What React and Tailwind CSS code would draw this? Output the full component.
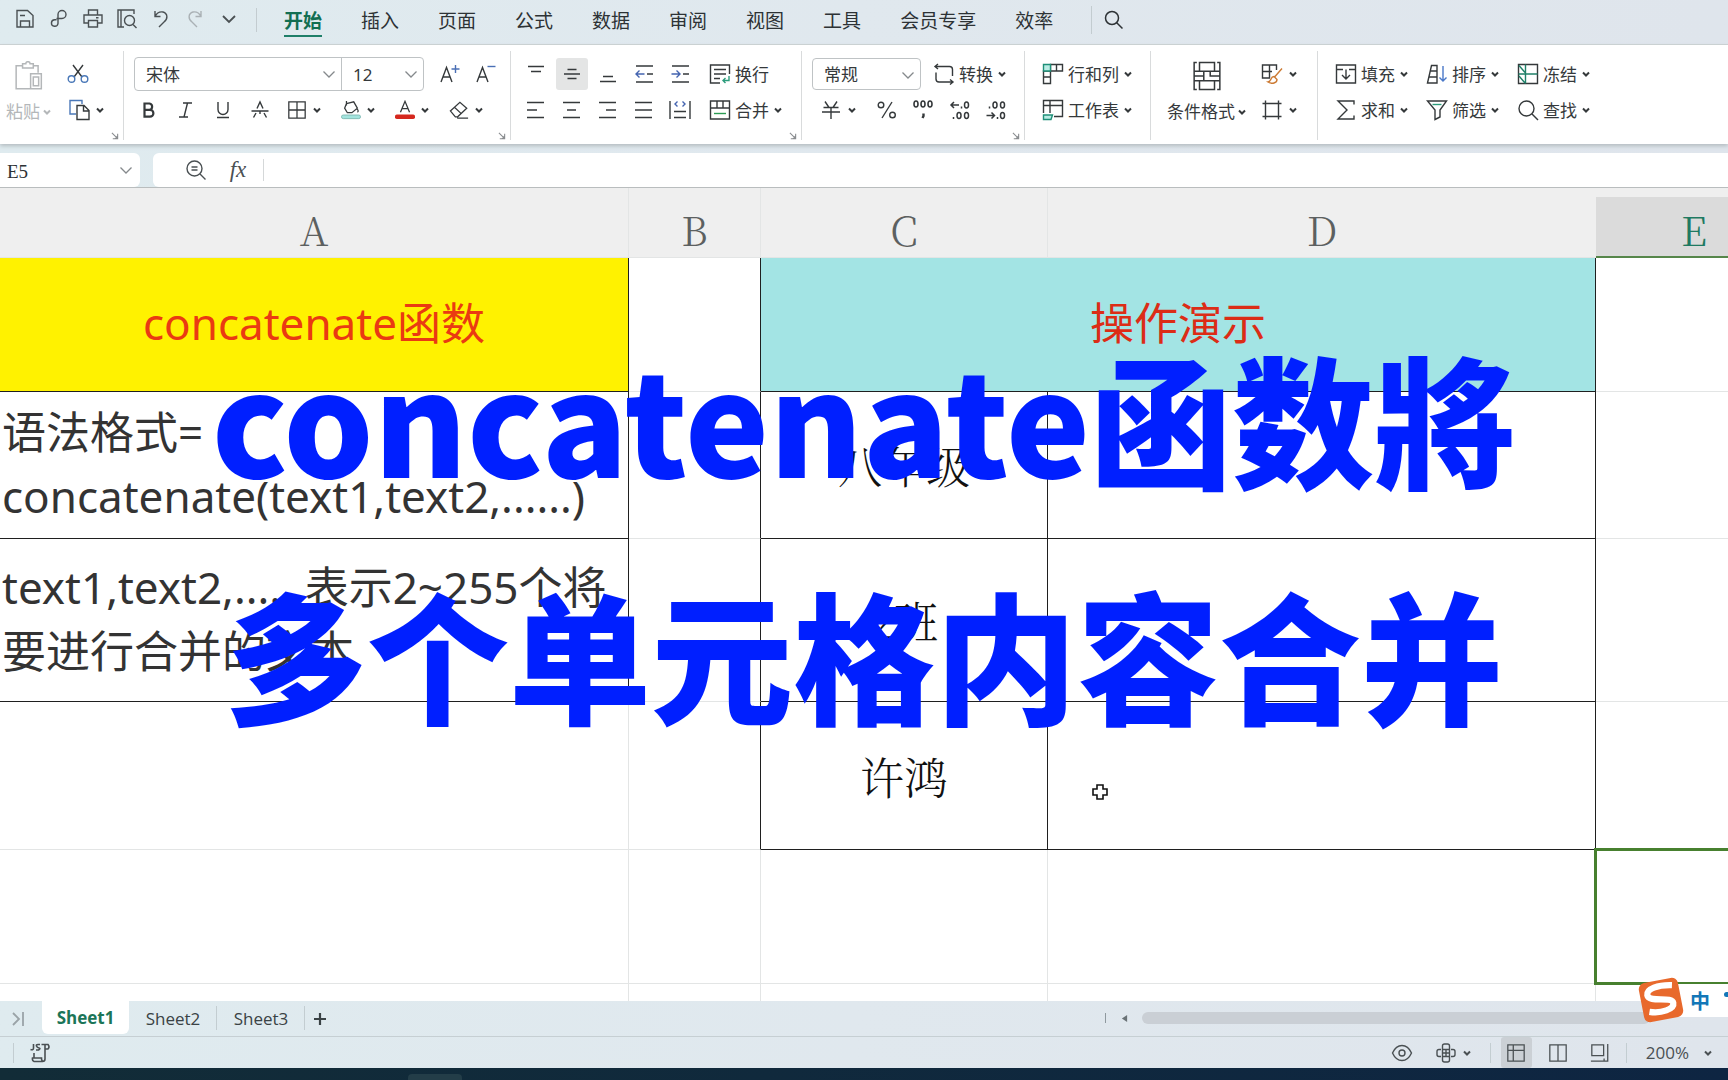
import React, { useState } from 'react';

const MENUS = ['开始', '插入', '页面', '公式', '数据', '审阅', '视图', '工具', '会员专享', '效率'];
const SHEETS = ['Sheet1', 'Sheet2', 'Sheet3'];

// 22x22 line icon
const Icon = ({ children, className = 'w-[22px] h-[22px]', box = '0 0 22 22', width = 1.4 }) => (
  <svg viewBox={box} className={`shrink-0 ${className}`} fill="none" stroke="currentColor" strokeWidth={width} aria-hidden="true">
    {children}
  </svg>
);

const Caret = () => (
  <svg viewBox="0 0 10 10" className="w-[10px] h-[10px] shrink-0" fill="none" stroke="currentColor" strokeWidth="2" aria-hidden="true">
    <path d="M2 3.5 5 6.5 8 3.5" />
  </svg>
);

const Chevron = ({ className = '' }) => (
  <svg viewBox="0 0 14 10" className={`w-[14px] h-[10px] ${className}`} fill="none" stroke="#85898c" strokeWidth="1.3" aria-hidden="true">
    <path d="M1.5 2.5 7 8l5.5-5.5" />
  </svg>
);

const Launcher = () => (
  <button aria-label="更多设置" className="absolute right-[5px] bottom-[4px] text-[#8a8d90]">
    <Icon box="0 0 9 9" className="w-[8px] h-[8px]" width={1.2}>
      <path d="M1 1l6 6M7.5 2v5.5H2M4.5 7.5l3-3" />
    </Icon>
  </button>
);

const Group = ({ children, className = '' }) => (
  <div className={`relative shrink-0 flex h-full pt-[11px] ${className}`}>
    {children}
    <span className="absolute right-0 top-[6px] bottom-[4px] w-px bg-[#d9dbdc]" />
  </div>
);

const Tool = ({ label, children, className = 'w-[36px]' }) => (
  <button aria-label={label} className={`h-[36px] shrink-0 flex items-center justify-center ${className}`}>{children}</button>
);

// icon followed by a small caret
const DropTool = ({ label, children, className = 'w-[54px] pl-[9px]' }) => (
  <button aria-label={label} className={`h-[36px] shrink-0 flex items-center gap-[5px] ${className}`}>
    {children}
    <Caret />
  </button>
);

const TextTool = ({ icon, label, caret = true }) => (
  <button className="h-[36px] shrink-0 flex items-center gap-1 whitespace-nowrap">
    {icon}
    <span className="pt-[2px]">{label}</span>
    {caret && <Caret />}
  </button>
);

const Select = ({ label, options, className }) => (
  <div className={`relative h-[32px] ${className}`}>
    <select aria-label={label} className="appearance-none w-full h-full pl-[11px] pt-[2px] bg-transparent outline-none leading-[28px]">
      {options.map((o) => <option key={o}>{o}</option>)}
    </select>
    <Chevron className="absolute right-[5px] top-[11px] pointer-events-none" />
  </div>
);

const Lines = ({ d }) => <Icon><path d={d} /></Icon>;

const TopBar = () => {
  const [active, setActive] = useState('开始');
  return (
    <div className="h-[45px] shrink-0 flex items-center border-b border-[#cdd3d5] text-[#2d3235]">
      <div className="flex items-center pl-[14px] gap-[12px] text-[#4a5053] -mt-[6px]">
        <button aria-label="保存"><Icon><path d="M3 2.5h10.500L19 7.500v11.500H3zM6.500 19v-6h9v6M6 7.500h5" /></Icon></button>
        <button aria-label="分享"><Icon><path d="M8.500 10.500h5.500a4 4 0 1 0-4-4v9a3.300 3.300 0 1 1-3.300-3.800h1.800" /></Icon></button>
        <button aria-label="打印"><Icon><path d="M6.500 7V2h9v5M6 15H2V7h18v8h-4M6.500 12.500h9V19h-9zM14 9.800h2.500" /></Icon></button>
        <button aria-label="打印预览"><Icon><path d="M8 19H2V2h16v4M5 2v17" /><circle cx="13.500" cy="12.500" r="5" /><path d="M17 16.500l3.500 3.500" /></Icon></button>
        <button aria-label="撤销"><Icon><path d="M5 3v5.500h5.500M5 8.500c2-4 5-5 8-4.500 5 1.500 5 7 1 10l-5 5" /></Icon></button>
        <button aria-label="恢复" className="text-[#aab1b5]"><Icon><path d="M17 3v5.500h-5.500M17 8.500C15 4.500 12 3.500 9 4c-5 1.500-5 7-1 10l5 5" /></Icon></button>
        <button aria-label="更多"><Icon width={1.8}><path d="M5 8l6 6 6-6" /></Icon></button>
      </div>
      <span className="w-px h-[24px] ml-[16px] bg-[#c3ccd0] -mt-[4px]" />
      <nav className="flex gap-[39px] ml-[27px] text-[19px] leading-[28px]">
        {MENUS.map((m) => (
          <a
            key={m}
            href="#"
            onClick={() => setActive(m)}
            className={m === active
              ? 'h-[30px] font-bold text-[#126e52] border-b-[2px] border-[#1f7f69]'
              : 'h-[30px] border-b-[2px] border-transparent'}
          >
            {m}
          </a>
        ))}
      </nav>
      <span className="w-px h-[28px] ml-[38px] bg-[#c3ccd0] -mt-[4px]" />
      <button aria-label="搜索" className="ml-[11px] -mt-[4px]">
        <Icon width={1.5}><circle cx="9" cy="9" r="6.500" /><path d="M13.500 13.500l6 6" /></Icon>
      </button>
    </div>
  );
};

const Ribbon = () => (
  <div className="h-[99px] shrink-0 flex bg-white text-[17px] leading-[24px] text-[#35393b] shadow-[0_2px_4px_#b4bcc0]">
    <Group className="w-[124px]">
      <button className="w-[56px] h-[70px] pt-[5px] pl-[6px] flex flex-col items-start text-[#b4b7b9]">
        <Icon box="0 0 28 28" className="w-[30px] h-[30px] ml-[8px]">
          <path d="M8 4.500H2V26h13M18 4.500h4.500V11M8 2.500h3c0-2.500 4-2.500 4 0h3v4H8zM15.500 12h10v14h-10zM18 15h5v8h-5z" />
        </Icon>
        <span className="flex items-center gap-[2px] h-[28px] mt-[7px] whitespace-nowrap">粘贴<Caret /></span>
      </button>
      <div className="flex flex-col pl-[9px]">
        <Tool label="剪切" className="w-[26px]">
          <Icon>
            <path d="M6 2l9 12M16 2L7 14" />
            <circle cx="4.500" cy="16" r="3.300" stroke="#4a78b8" />
            <circle cx="17.500" cy="16" r="3.300" stroke="#4a78b8" />
          </Icon>
        </Tool>
        <DropTool label="复制" className="w-[40px] pl-[3px]">
          <Icon>
            <path d="M8 15H2V1.500h12V5" stroke="#4a78b8" />
            <path d="M9 6.500h7l5 5V20.500H9zM15.500 6.500V12H21" />
          </Icon>
        </DropTool>
      </div>
      <Launcher />
    </Group>

    <Group className="w-[387px] flex-col pl-[6px]">
      <div className="flex h-[36px] items-center pl-[4px]">
        <div className="flex border border-[#bfc3c5] rounded-[4px]">
          <Select label="字体" options={['宋体', '微软雅黑', '黑体']} className="w-[207px] border-r border-[#bfc3c5]" />
          <Select label="字号" options={['12', '14', '16']} className="w-[81px]" />
        </div>
        <Tool label="增大字号" className="w-[36px] ml-[8px]">
          <Icon><path d="M2 19L7.500 4.500 13 19M4 14h7" /><path d="M12.500 6h8M16.500 2v8" stroke="#4a6fb5" /></Icon>
        </Tool>
        <Tool label="减小字号">
          <Icon><path d="M2 19L7.500 4.500 13 19M4 14h7" /><path d="M12.500 3.500h8" stroke="#4a6fb5" /></Icon>
        </Tool>
      </div>
      <div className="flex">
        <Tool label="加粗" className="w-[37px]"><Icon width={2.2}><path d="M6.500 4.500h5a3.200 3.200 0 0 1 0 6.300H6.500zM6.500 10.800h5.500a3.400 3.400 0 0 1 0 6.800H6.500z" /></Icon></Tool>
        <Tool label="倾斜" className="w-[37px]"><Icon><path d="M8 4h9M4 18h9M12.500 4L9 18" /></Icon></Tool>
        <Tool label="下划线" className="w-[37px]"><Icon><path d="M6 3v7.500a5 5 0 0 0 10 0V3M5 18.500h12" /></Icon></Tool>
        <Tool label="删除线" className="w-[37px]"><Icon><path d="M2.500 12h17M8 9.500L11 3l3 6.500M4.500 18.500L7 14M17.500 18.500L15 14M11 12v3" /></Icon></Tool>
        <DropTool label="边框"><Icon className="w-[20px] h-[20px]"><path d="M2 2h18v18H2zM11 2v18M2 11h18" /></Icon></DropTool>
        <DropTool label="填充颜色">
          <Icon className="w-[20px] h-[20px]">
            <path d="M6 4l8-2 4 7-6 5H7L4 9zM6 1v5M17.500 9.500c2 2 1.500 3.500.5 4" />
            <rect x="0.500" y="16.500" width="21" height="4" rx="2" fill="#a3e4de" stroke="#7fb9b3" strokeWidth="1" />
          </Icon>
        </DropTool>
        <DropTool label="字体颜色">
          <Icon className="w-[20px] h-[20px]">
            <path d="M6 13.500L11 1.500l5 12M8 9.500h6" />
            <rect x="0" y="16" width="22" height="5" rx="2" fill="#d5281e" stroke="none" />
          </Icon>
        </DropTool>
        <DropTool label="清除格式">
          <Icon className="w-[20px] h-[20px]"><path d="M1.500 12L12 2.500l7.500 6.500L9.500 18.500H7zM6 8l7.500 7M9 20h12" /></Icon>
        </DropTool>
      </div>
      <Launcher />
    </Group>

    <Group className="w-[291px] pl-[7px]">
      <div className="flex flex-col">
        <div className="flex items-center h-[36px]">
          <Tool label="顶端对齐"><Lines d="M3 3.500h16M6 8.500h10" /></Tool>
          <Tool label="垂直居中" className="w-[36px]">
            <span className="flex items-center justify-center w-[32px] h-[32px] rounded-[3px] bg-[#e4e5e5]"><Lines d="M6.500 6.500h9M3 11h16M6.500 15.500h9" /></span>
          </Tool>
          <Tool label="底端对齐"><Lines d="M6 13.500h10M3 18.500h16" /></Tool>
          <Tool label="减少缩进"><Icon><path d="M3 3h17M14 11h6M3 19h17" /><path d="M11.500 11H3M6.500 7.500L3 11l3.500 3.500" stroke="#4464b0" /></Icon></Tool>
          <Tool label="增加缩进"><Icon><path d="M3 3h17M14 11h6M3 19h17" /><path d="M2.500 11H11M7.500 7.500L11 11l-3.500 3.500" stroke="#4464b0" /></Icon></Tool>
        </div>
        <div className="flex">
          <Tool label="左对齐"><Lines d="M2 3.500h17M2 11h10M2 18.500h17" /></Tool>
          <Tool label="居中"><Lines d="M2 3.500h17M6 11h9M2 18.500h17" /></Tool>
          <Tool label="右对齐"><Lines d="M2 3.500h17M9 11h10M2 18.500h17" /></Tool>
          <Tool label="两端对齐"><Lines d="M2 3.500h17M2 11h17M2 18.500h17" /></Tool>
          <Tool label="分散对齐"><Icon><path d="M1 2v18M21 2v18M5 12.500h12M5 18.500h12" /><path d="M8.500 2.500L6 5l2.500 2.500M13.500 2.500L16 5l-2.500 2.500" stroke="#4464b0" /></Icon></Tool>
        </div>
      </div>
      <div className="flex flex-col items-start pl-[11px]">
        <TextTool
          label="换行"
          caret={false}
          icon={<Icon><path d="M11 20H1.500V2h19v9M5 6.500h12M5 11h12M5 15.500h6" /><path d="M20 13v4.500h-6M16.500 15L14 17.500l2.500 2.500" stroke="#2c9c7c" /></Icon>}
        />
        <TextTool
          label="合并"
          icon={<Icon><path d="M1.500 2h19v18h-19zM1.500 9h19M8 2v7M14 2v7" /><path d="M5 14.500h12" stroke="#2c9c54" /></Icon>}
        />
      </div>
      <Launcher />
    </Group>

    <Group className="w-[223px] flex-col pl-[10px]">
      <div className="flex h-[36px] items-center">
        <Select label="数字格式" options={['常规', '数值', '货币']} className="w-[109px] border border-[#bfc3c5] rounded-[4px]" />
        <div className="pl-[12px]">
          <TextTool
            label="转换"
            icon={<Icon><path d="M2 3.500h14.500q3 0 3 3V13M5 1L2 3.500 5 6M19.500 19H6q-3 0-3-3V9.500M17 16.500l3 2.500-3 2.500" /></Icon>}
          />
        </div>
      </div>
      <div className="flex">
        <DropTool label="货币" className="w-[57px] pl-[8px]"><Icon><path d="M5 2.500l4 6M17 2.500l-4 6M3.500 8.500h15M2 13h18M11 8.500V20" /></Icon></DropTool>
        <Tool label="百分比"><Icon><circle cx="5" cy="6" r="2.800" /><circle cx="16.500" cy="16" r="2.800" /><path d="M16 3L6 19" /></Icon></Tool>
        <Tool label="千位分隔"><Icon width={1.6}><ellipse cx="4" cy="5" rx="2" ry="3" /><ellipse cx="11" cy="5" rx="2" ry="3" /><ellipse cx="18" cy="5" rx="2" ry="3" /><path d="M11.500 14.500v2.500l-1 2" strokeWidth="2.400" /></Icon></Tool>
        <Tool label="增加小数位" className="w-[37px]"><Icon width={1.5}><path d="M10 6H2M5 3L2 6l3 3M12.500 7.500v2M4.500 18v2" /><ellipse cx="17.500" cy="6" rx="2" ry="3" /><ellipse cx="10" cy="16.500" rx="2" ry="3" /><ellipse cx="17.500" cy="16.500" rx="2" ry="3" /></Icon></Tool>
        <Tool label="减少小数位"><Icon width={1.5}><path d="M1.500 16.500h8M6.500 13.500l3 3-3 3M12.500 18v2M4.500 7.500v2" /><ellipse cx="10" cy="6" rx="2" ry="3" /><ellipse cx="17.500" cy="6" rx="2" ry="3" /><ellipse cx="17.500" cy="16.500" rx="2" ry="3" /></Icon></Tool>
      </div>
      <Launcher />
    </Group>

    <Group className="w-[126px] flex-col items-start pl-[17px]">
      <TextTool
        label="行和列"
        icon={<Icon><path d="M8.500 1.500h12V8h-12zM14.500 1.500V8M1.500 8h7v12.500h-7zM1.500 14h7" /><path d="M1.500 1.500h7V8h-7z" fill="#b9ece4" stroke="#1f8f78" /></Icon>}
      />
      <TextTool
        label="工作表"
        icon={<Icon><path d="M1.500 14V1.500h19v16H12M1.500 6.500h19M8 1.500V14" /><path d="M1.500 16h9l-1.500 4.500H1.500z" fill="#b9ece4" stroke="#1f8f78" /></Icon>}
      />
    </Group>

    <Group className="w-[167px] pl-[16px]">
      <button className="h-[70px] pt-[5px] flex flex-col items-center">
        <Icon box="0 0 28 28" className="w-[30px] h-[30px]">
          <path d="M4.500 1.500H2v25h2.500M23.500 1.500H26v25h-2.500M7 1.500h14v8H7zM7 18.500h14v8H7zM2 9.500h5M21 9.500h5M2 18.500h5M21 18.500h5M11 9.500v9M17 9.500v4.500h9M11 14H2" />
        </Icon>
        <span className="flex items-center gap-[2px] h-[28px] mt-[7px] whitespace-nowrap">条件格式<Caret /></span>
      </button>
      <div className="flex flex-col pl-[14px]">
        <DropTool label="表格样式" className="w-[46px]">
          <Icon><path d="M9 15H1.500V2h14v5M1.500 8.500H11M8.500 2v13" /><path d="M21 5.500l-7 8M13 13.500c-4 0-2 5-6 5.500 4 2.500 9 1 9-2.500z" stroke="#cc7a33" /></Icon>
        </DropTool>
        <DropTool label="单元格" className="w-[46px]"><Icon><path d="M1.500 4.500h19M1.500 17.500h19M4.500 1.500v19M17.500 1.500v19" /></Icon></DropTool>
      </div>
    </Group>

    <div className="flex gap-[17px] pl-[17px] pt-[11px]">
      <div className="flex flex-col items-start">
        <TextTool label="填充" icon={<Icon><path d="M8 6.500H1.500V2h19v4.500H14M1.500 6.500V20h19V6.500M11 6.500v9.500M7 12l4 4 4-4" /></Icon>} />
        <TextTool label="求和" icon={<Icon><path d="M19 5.500V2H3l9 9-9 9h16v-3.500" /></Icon>} />
      </div>
      <div className="flex flex-col items-start">
        <TextTool label="排序" icon={<Icon><path d="M1.500 20L5.500 2.500H11V20zM4.500 8H11M3 14h8" /><path d="M17 3v15M13.500 14.500L17 18l3.500-3.500" stroke="#4a78c8" /></Icon>} />
        <TextTool label="筛选" icon={<Icon><path d="M1.500 2h19L14 11v7l-5 2.500V11z" /><path d="M6.500 5.500h9" stroke="#2c9c7c" /></Icon>} />
      </div>
      <div className="flex flex-col items-start">
        <TextTool label="冻结" icon={<Icon><path d="M1.500 1.500h19v19h-19z" /><path d="M8.500 1.500v19M1.500 11h19M2 2.500l6 7M2 13l6 7" stroke="#1f8068" /></Icon>} />
        <TextTool label="查找" icon={<Icon><circle cx="9.500" cy="9.500" r="7.500" /><path d="M15 15l6 6" /></Icon>} />
      </div>
    </div>
  </div>
);

const FormulaBar = () => (
  <div className="shrink-0 flex gap-[13px] pt-[9px] border-b border-[#b9bdbe]">
    <div className="relative w-[140px] h-[34px] bg-white rounded-r-[6px]">
      <input aria-label="名称框" defaultValue="E5" className="w-full h-full pl-[7px] pt-[3px] outline-none bg-transparent text-[19px] text-[#2d3235] font-['Liberation_Serif','Noto_Serif_CJK_SC',serif]" />
      <Chevron className="absolute right-[7px] top-[12px]" />
    </div>
    <div className="flex-1 min-w-0 h-[34px] flex items-center bg-white rounded-l-[6px] pl-[32px] text-[#4a5053]">
      <button aria-label="浏览公式结果"><Icon><circle cx="9.500" cy="9.500" r="7.500" /><path d="M15 15l5.500 5.500M6.500 8h6M6.500 11h6" /></Icon></button>
      <button aria-label="插入函数" className="ml-[20px] w-[22px] text-[23px] leading-[28px] italic font-['Liberation_Serif',serif]">fx</button>
      <span className="w-px h-[22px] ml-[14px] bg-[#d5d8d9]" />
      <input aria-label="编辑栏" className="flex-1 min-w-0 h-full pl-2 outline-none bg-transparent" />
    </div>
  </div>
);

const thBase = 'p-0 font-light text-[40px] leading-[48px] text-center align-middle';
const grid = 'border-r border-b border-[#e3e5e5]';
const ruled = 'border-r border-b border-[#1f1f1f]';
const ruledRight = 'border-r border-b border-r-[#1f1f1f] border-b-[#e3e5e5]';
const serif = "font-['Noto_Serif_CJK_SC','Noto_Sans_CJK_SC',serif]";

const SheetGrid = () => (
  <table className="w-[1792px] table-fixed border-separate border-spacing-0 bg-white text-[44px] leading-[64px] text-[#333]">
    <colgroup>
      <col className="w-[629px]" />
      <col className="w-[132px]" />
      <col className="w-[287px]" />
      <col className="w-[548px]" />
      <col />
    </colgroup>
    <thead className={serif}>
      <tr className="h-[70px] bg-[#efefef] text-[#5c6060]">
        <th className={`${thBase} ${grid} pt-[12px]`}>A</th>
        <th className={`${thBase} ${grid} pt-[12px]`}>B</th>
        <th className={`${thBase} ${grid} pt-[12px]`}>C</th>
        <th className={`${thBase} border-b border-[#e3e5e5] pt-[12px]`}>D</th>
        <th className={`${thBase} text-[#1f7a62] border-b-2 border-[#56864a] border-t-[9px] border-t-[#efefef] bg-[#dbdbdb] pt-[4px]`}>E</th>
      </tr>
    </thead>
    <tbody>
      <tr className="h-[134px]">
        <td className={`${ruled} p-0 pb-[4px] text-center bg-[#fff200] text-[#ea3a12]`}>concatenate函数</td>
        <td className={ruledRight} />
        <td colSpan={2} className={`${ruled} p-0 pb-[4px] text-center bg-[#a3e4e4] text-[#dc2c16]`}>操作演示</td>
        <td className={grid} />
      </tr>
      <tr className="h-[147px]">
        <td className={`${ruled} p-0 pb-[2px] pl-[2px]`}>语法格式=<br />concatenate(text1,text2,......)</td>
        <td className={ruledRight} />
        <td className={`${ruled} ${serif} p-0 text-center text-[#111] font-light`}>八年级</td>
        <td className={ruled} />
        <td className={grid} />
      </tr>
      <tr className="h-[163px]">
        <td className={`${ruled} p-0 pb-[2px] pl-[2px]`}>text1,text2,......表示2~255个将<br />要进行合并的文本</td>
        <td className={ruledRight} />
        <td className={`${ruled} ${serif} p-0 text-center text-[#111] font-light`}>2班</td>
        <td className={ruled} />
        <td className={grid} />
      </tr>
      <tr className="h-[148px]">
        <td className={grid} />
        <td className={ruledRight} />
        <td className={`${ruled} ${serif} p-0 text-center text-[#111] font-light`}>许鸿</td>
        <td className={ruled} />
        <td className={grid} />
      </tr>
      <tr className="h-[134px]">
        <td className={grid} />
        <td className={grid} />
        <td className={grid} />
        <td className={grid} />
        <td className={`${grid} relative`}>
          <span className="absolute -left-[2px] -top-[2px] -bottom-[2px] right-0 border-[3px] border-[#47802f]" />
        </td>
      </tr>
      <tr className="h-[40px]">
        <td className={grid} />
        <td className={grid} />
        <td className={grid} />
        <td className={grid} />
        <td className={grid} />
      </tr>
    </tbody>
  </table>
);

const SheetBar = () => {
  const [sheet, setSheet] = useState('Sheet1');
  return (
    <div className="h-[36px] shrink-0 flex border-b border-[#c6cfd3] text-[17px] leading-[34px] font-['Open_Sans',sans-serif] text-[#3a4245]">
      <button aria-label="最后一个工作表" className="w-[42px] pl-[7px] h-[35px] text-[#9aa3a7]">
        <Icon width={1.8}><path d="M6 5l6 6-6 6M16 4v14" /></Icon>
      </button>
      {SHEETS.map((s) => (
        <button
          key={s}
          onClick={() => setSheet(s)}
          className={s === sheet
            ? 'w-[87px] h-[33px] bg-white rounded-b-[6px] font-bold text-[#1b7558]'
            : 'relative w-[88px] h-[35px] after:absolute after:right-0 after:top-[5px] after:w-px after:h-[24px] after:bg-[#c3cdd1]'}
        >
          {s}
        </button>
      ))}
      <button aria-label="新建工作表" className="w-[30px] h-[35px] flex items-center justify-center">
        <Icon className="w-[14px] h-[14px]" box="0 0 14 14" width={2.2}><path d="M7 1v12M1 7h12" /></Icon>
      </button>
      <div className="ml-auto w-[623px] h-[34px] flex items-center">
        <span className="w-px h-[10px] bg-[#8f999e]" />
        <button aria-label="向左滚动" className="w-[36px] flex justify-center text-[#6a7276]">
          <svg viewBox="0 0 8 8" className="w-[7px] h-[7px]" fill="currentColor" aria-hidden="true"><path d="M7 0v8L1 4z" /></svg>
        </button>
        <span className="w-[508px] h-[12px] rounded-full bg-[#cacfd5]" />
      </div>
    </div>
  );
};

const StatusBar = () => (
  <div className="h-[31px] shrink-0 flex items-center text-[#4a5053]">
    <span className="w-px h-[20px] ml-[13px] bg-[#c3cdd1]" />
    <button aria-label="JS 宏" className="ml-[15px]">
      <Icon className="w-[22px] h-[22px]" width={1.6}>
        <path d="M4.500 2v4q0 2.500-3 1.500M11 2.500H9Q7 2.500 7.500 4T10 6t-.5 2H7M12.500 2.500h6.500q2 2.500 0 4.500h-3M16 3v14q0 2.500-2.500 2.500H5Q3 19 3.500 16h9q0 3.500 2 3M5 16v-5" />
      </Icon>
    </button>
    <div className="ml-auto flex items-center h-full">
      <button aria-label="护眼模式">
        <Icon><path d="M1.500 11C4 5.500 7.500 3.500 11 3.500s7 2 9.500 7.500c-2.500 5.500-6 7.500-9.500 7.500S4 16.500 1.500 11z" /><circle cx="11" cy="11" r="3" /></Icon>
      </button>
      <DropTool label="阅读模式" className="w-[46px] ml-[22px]">
        <Icon><path d="M7.500 7V4q0-2 2-2h3q2 0 2 2v3M7.500 15v3q0 2 2 2h3q2 0 2-2v-3M6 7.500H4q-2 0-2 2v3q0 2 2 2h2M16 7.500h2q2 0 2 2v3q0 2-2 2h-2M7.500 7.500h7v7h-7zM11 7.500v7M7.500 11h7" /></Icon>
      </DropTool>
      <span className="w-px h-[20px] ml-[9px] bg-[#c3cdd1]" />
      <button aria-label="普通视图" className="ml-[10px] w-[31px] h-full flex items-center justify-center bg-[#cbd0d5] rounded-[3px]">
        <Icon className="w-[20px] h-[20px]"><path d="M2 2h18v18H2zM2 8h18M8 2v18" /></Icon>
      </button>
      <button aria-label="分页预览" className="ml-[16px]"><Icon className="w-[20px] h-[20px]"><path d="M2 2h18v18H2zM11 2v18" /></Icon></button>
      <button aria-label="页面布局" className="ml-[22px]"><Icon className="w-[20px] h-[20px]"><path d="M2 2h13v12H2zM19.500 1v19H1M15.500 20v-3" /></Icon></button>
      <span className="w-px h-[20px] ml-[16px] bg-[#c3cdd1]" />
      <button className="flex items-center gap-[14px] ml-[19px] mr-[15px] text-[17px] leading-[24px] font-['Open_Sans',sans-serif]">
        200%<Caret />
      </button>
    </div>
  </div>
);

const App = () => (
  <div className="relative h-screen flex flex-col overflow-hidden bg-linear-to-r from-[#dfebef] via-[#e0e8ee] to-[#dfe5ec] font-['Noto_Sans','Noto_Sans_CJK_SC',sans-serif]">
    <TopBar />
    <Ribbon />
    <FormulaBar />
    <div className="flex-1 min-h-0 overflow-hidden bg-white">
      <SheetGrid />
    </div>
    <SheetBar />
    <StatusBar />
    <div className="h-[12px] shrink-0 bg-linear-to-r from-[#122c37] to-[#0e2542] flex">
      <span className="w-[54px] h-[6px] mt-[6px] ml-[408px] rounded-t-[4px] bg-[#233d48]" />
    </div>

    {/* cell cursor */}
    <svg viewBox="0 0 18 18" className="absolute left-[1091px] top-[783px] w-[18px] h-[18px]" fill="#fff" stroke="#111" strokeWidth="1.6" aria-hidden="true">
      <path d="M6 2h6v4h4v6h-4v4H6v-4H2V6h4z" />
    </svg>

    {/* caption */}
    <p className="absolute inset-x-0 top-[298px] text-center whitespace-nowrap text-[142px] leading-[236px] font-black text-[#001fff] pointer-events-none font-['Noto_Sans_CJK_SC',sans-serif]">
      concatenate函数將<br />多个单元格内容合并
    </p>

    {/* input method bar */}
    <div className="absolute right-0 top-[984px] w-[84px] h-[33px] bg-white flex items-center overflow-visible">
      <svg viewBox="0 0 44 44" className="absolute -left-[6px] -top-[7px] w-[46px] h-[46px]" aria-hidden="true">
        <g transform="rotate(-11 22 22)">
          <rect x="3" y="3" width="38" height="38" rx="6" fill="#e8692c" />
          <path d="M35 10C22 7 10 9 10 15c0 8 23 5 23 12 0 6-13 8-24 4" fill="none" stroke="#fff" strokeWidth="6" />
        </g>
      </svg>
      <button className="ml-[46px] text-[20px] leading-[30px] font-bold text-[#1377b8] font-['Noto_Sans_CJK_SC',sans-serif]">中</button>
      <span className="ml-[14px] w-[4px] h-[5px] rounded-l-full bg-[#1377b8] -mt-[12px]" />
    </div>
  </div>
);

export default App;
